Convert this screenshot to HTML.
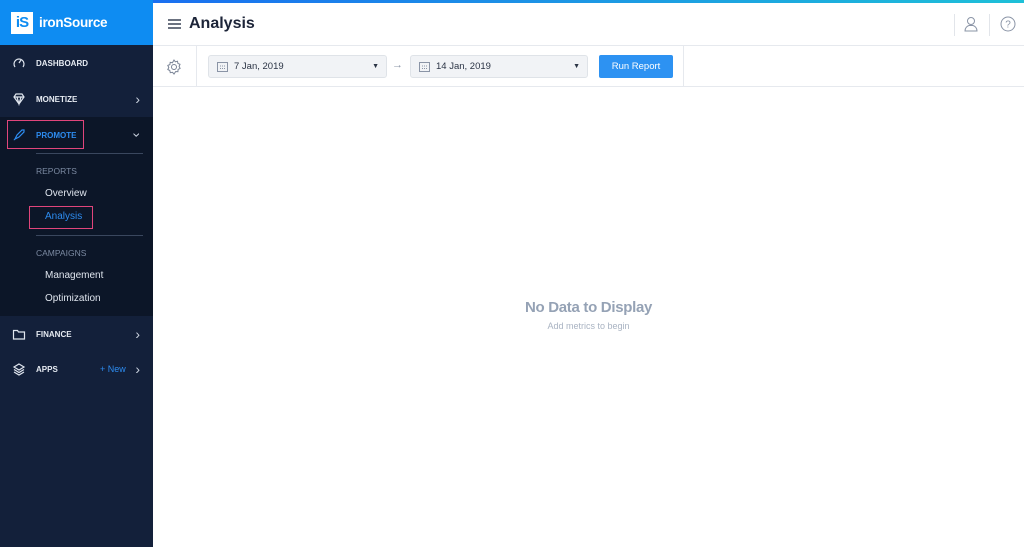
<!DOCTYPE html>
<html><head><meta charset="utf-8"><style>
*{box-sizing:border-box;margin:0;padding:0}
body{width:1024px;height:547px;overflow:hidden;font-family:"Liberation Sans",sans-serif;background:#fff;position:relative}
.sb{position:absolute;left:0;top:0;width:153px;height:547px;background:#13203a}
.logo{height:45px;background:#0e8cf2;display:flex;align-items:center;padding-left:11px;color:#fff;font-weight:bold;font-size:13.5px;letter-spacing:-.3px}
.logo .b{width:22px;height:22px;background:#fff;color:#0e8cf2;font-size:15px;display:flex;align-items:center;justify-content:center;margin-right:6px;letter-spacing:-1px}
.it{position:absolute;left:0;width:153px;height:36px;display:flex;align-items:center;color:#e6ebf2;font-size:8px;font-weight:bold}
.it .ic{position:absolute;left:12px;top:11px;width:14px;height:14px}
.it .t{position:absolute;left:36px}
.it .ch{position:absolute;right:13px;font-size:14px;font-weight:normal;color:#c9d1de}
.dark{position:absolute;left:0;top:117px;width:153px;height:199px;background:#0c1628}
.sub{position:absolute;color:#dfe5ee;font-size:10px}
.hd{position:absolute;left:36px;color:#7c8aa2;font-size:8.5px}
.line{position:absolute;left:36px;width:107px;height:1px;background:#3a475e}
.top{position:absolute;left:153px;top:0;right:0;height:3px;background:linear-gradient(90deg,#1a6ff0,#1ec0d8)}
.hb{position:absolute;left:153px;top:3px;right:0;height:43px;border-bottom:1px solid #e6e9ee}
.tb{position:absolute;left:153px;top:46px;right:0;height:41px;border-bottom:1px solid #e6e9ee}
.dd{position:absolute;top:9px;height:23px;background:#f1f3f6;border:1px solid #dfe3e8;border-radius:3px;font-size:9.5px;color:#2b3445;display:flex;align-items:center}
</style></head><body>
<div class="sb">
 <div class="logo"><div class="b">iS</div>ironSource</div>
 <div class="dark"></div>
 <div class="it" style="top:45px"><svg class="ic" viewBox="0 0 14 14" fill="none" stroke="#dfe5ee" stroke-width="1.2"><path d="M3 11A5 5 0 1 1 11 11"/><path d="M7 7l2-3"/></svg><span class="t">DASHBOARD</span></div>
 <div class="it" style="top:81px"><svg class="ic" viewBox="0 0 14 14" fill="none" stroke="#dfe5ee" stroke-width="1.2"><path d="M2 5l2-3h6l2 3-5 7z M2 5h10 M5 5l2 7 2-7"/></svg><span class="t">MONETIZE</span><span class="ch">›</span></div>
 <div class="it" style="top:117px;color:#2d8cf0"><svg class="ic" viewBox="0 0 14 14" fill="none" stroke="#2d8cf0" stroke-width="1.2"><path d="M3 11l2-4 5-5 2 0 0 2-5 5z M3 11l-1 1"/></svg><span class="t">PROMOTE</span><span class="ch" style="transform:rotate(90deg)">›</span></div>
 <div style="position:absolute;left:7px;top:120px;width:77px;height:29px;border:1.5px solid #e0457b"></div>
 <div class="line" style="top:153px"></div>
 <div class="hd" style="top:166px">REPORTS</div>
 <div class="sub" style="left:45px;top:188px">Overview</div>
 <div class="sub" style="left:45px;top:211px;color:#2d8cf0">Analysis</div>
 <div style="position:absolute;left:29px;top:206px;width:64px;height:23px;border:1.5px solid #e0457b"></div>
 <div class="line" style="top:235px"></div>
 <div class="hd" style="top:248px">CAMPAIGNS</div>
 <div class="sub" style="left:45px;top:270px">Management</div>
 <div class="sub" style="left:45px;top:293px">Optimization</div>
 <div class="it" style="top:316px"><svg class="ic" viewBox="0 0 14 14" fill="none" stroke="#dfe5ee" stroke-width="1.2"><path d="M1.5 3.5h4l1 1.5h6v7h-11z"/></svg><span class="t">FINANCE</span><span class="ch">›</span></div>
 <div class="it" style="top:351px"><svg class="ic" viewBox="0 0 14 14" fill="none" stroke="#dfe5ee" stroke-width="1.2"><path d="M7 2l5 3-5 3-5-3z M2 7.5l5 3 5-3 M2 10l5 3 5-3"/></svg><span class="t">APPS</span><span style="position:absolute;left:100px;color:#2d8cf0;font-weight:normal;font-size:9px">+ New</span><span class="ch">›</span></div>
</div>
<div class="top"></div>
<div class="hb">
 <svg style="position:absolute;left:15px;top:16px" width="13" height="10"><path d="M0 1h13M0 5h13M0 9h13" stroke="#3a4456" stroke-width="1.4"/></svg>
 <div style="position:absolute;left:36px;top:12px;font-size:16px;font-weight:bold;color:#1c2438">Analysis</div>
 <div style="position:absolute;left:801px;top:11px;width:1px;height:22px;background:#e2e5ea"></div>
 <div style="position:absolute;left:836px;top:11px;width:1px;height:22px;background:#e2e5ea"></div>
 <svg style="position:absolute;left:811px;top:13px" width="14" height="16" fill="none" stroke="#8a94a6" stroke-width="1"><circle cx="7" cy="5" r="3.5"/><path d="M1 15c0-3 2-5 4-5.5h4c2 .5 4 2.5 4 5.5z"/></svg>
 <svg style="position:absolute;left:847px;top:13px" width="16" height="16" fill="none" stroke="#8a94a6" stroke-width="1"><circle cx="8" cy="8" r="7"/><text x="8" y="11.5" text-anchor="middle" font-size="10" fill="#8a94a6" stroke="none" font-family="Liberation Sans">?</text></svg>
</div>
<div class="tb">
 <div style="position:absolute;left:43px;top:0;width:1px;height:41px;background:#e6e9ee"></div>
 <div style="position:absolute;left:530px;top:0;width:1px;height:41px;background:#e6e9ee"></div>
 <svg style="position:absolute;left:13px;top:13px" width="16" height="16" viewBox="0 0 16 16" fill="none" stroke="#7a8496" stroke-width="1"><circle cx="8" cy="8" r="2.5"/><path d="M8 1l1.3 1.8 2.2-.6.4 2.2 2.1.9-.9 2.1 1 2-2 1-.2 2.3-2.2-.2L8 15l-1.5-1.7-2.2.4-.5-2.2-2-1 1-2-1-2.1 2.1-.8.3-2.3 2.2.5z"/></svg>
 <div class="dd" style="left:55px;width:179px"><svg style="margin:0 6px 0 8px" width="11" height="11" fill="none" stroke="#8a94a6"><rect x=".5" y="1.5" width="10" height="9"/><path d="M3 5h1M5 5h1M7 5h1M3 7.5h1M5 7.5h1M7 7.5h1" /></svg>7 Jan, 2019<span style="position:absolute;right:7px;font-size:7px">▼</span></div>
 <div style="position:absolute;left:239px;top:13px;color:#8a94a6;font-size:11px">→</div>
 <div class="dd" style="left:257px;width:178px"><svg style="margin:0 6px 0 8px" width="11" height="11" fill="none" stroke="#8a94a6"><rect x=".5" y="1.5" width="10" height="9"/><path d="M3 5h1M5 5h1M7 5h1M3 7.5h1M5 7.5h1M7 7.5h1" /></svg>14 Jan, 2019<span style="position:absolute;right:7px;font-size:7px">▼</span></div>
 <div style="position:absolute;left:446px;top:9px;width:74px;height:23px;background:#2d92f2;border-radius:2px;color:#fff;font-size:9.5px;display:flex;align-items:center;justify-content:center">Run Report</div>
</div>
<div style="position:absolute;left:153px;right:0;top:299px;text-align:center;color:#95a2b5;font-size:15px;font-weight:bold;letter-spacing:-.3px">No Data to Display</div>
<div style="position:absolute;left:153px;right:0;top:321px;text-align:center;color:#a9b3c2;font-size:9px">Add metrics to begin</div>
</body></html>
